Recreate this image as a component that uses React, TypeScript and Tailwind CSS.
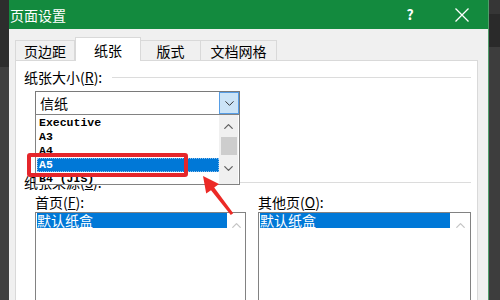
import React from "react";
import { ChevronDown, ChevronUp } from "lucide-react";

// paper sizes shown in the open dropdown
const sizes = ["Executive", "A3", "A4", "A5", "B4 (JIS)"];

const GroupLabel = ({ text, k }: { text: string; k: string }) => (
  <div className="flex items-center pl-[8px] pr-[6px]">
    <span className="leading-[16px]">
      {text}(<span className="underline">{k}</span>):
    </span>
    <div className="ml-[10px] h-px flex-1 bg-[#dcdcdc]" />
  </div>
);

const ListBox = ({ width, rowWidth }: { width: string; rowWidth: string }) => (
  <div className={`flex h-[100px] border border-[#828282] bg-white ${width}`}>
    <div className={rowWidth}>
      <div className="h-[15px] bg-[#0078d7] leading-[15px] text-white">默认纸盒</div>
    </div>
    <div className="flex flex-1 justify-center pt-[5px] text-[#c4c4c4]">
      <ChevronUp size={15} strokeWidth={2} />
    </div>
  </div>
);

const App = () => {
  return (
    <div className="relative flex h-[300px] w-[500px] overflow-hidden bg-[#3d3d3d] font-['Noto_Sans_CJK_SC','Noto_Sans',sans-serif] text-[14px] text-black">
      {/* left desktop strip */}
      <div className="flex w-[9px] shrink-0 flex-col">
        <div className="h-[67px] shrink-0 bg-[#2d2d2d]" />
        <div className="flex-1 bg-[#3f3f3f]" />
      </div>

      {/* dialog */}
      <div className="flex w-[480px] shrink-0 flex-col border-r border-[#4f9e6a] bg-[#f0f0f0]">
        <div className="flex h-[29px] shrink-0 items-center bg-[#138a3e] pl-[1px] text-white">
          <span className="leading-[16px]">页面设置</span>
          <span className="ml-auto w-[30px] text-center text-[14px] font-semibold">?</span>
          <svg className="ml-[25px] mr-[14px]" width="24" height="14" viewBox="0 0 24 14">
            <path d="M5.5 0.5 18.5 13.5 M18.5 0.5 5.5 13.5" stroke="white" strokeWidth="1.3" fill="none" />
          </svg>
        </div>

        {/* tabs */}
        <div className="relative z-10 flex shrink-0 items-end pl-[6px] pt-[8px]">
          <div className="flex h-[20px] w-[60px] items-center justify-center border border-b-0 border-[#d9d9d9] leading-[16px]">页边距</div>
          <div className="-mb-px flex h-[24px] w-[66px] items-center justify-center border border-b-0 border-[#d9d9d9] bg-white leading-[16px]">纸张</div>
          <div className="flex h-[20px] w-[60px] items-center justify-center border border-b-0 border-l-0 border-[#d9d9d9] leading-[16px]">版式</div>
          <div className="flex h-[20px] w-[76px] items-center justify-center border border-b-0 border-l-0 border-[#d9d9d9] leading-[16px]">文档网格</div>
        </div>

        {/* panel */}
        <div className="ml-[6px] flex h-[260px] w-[463px] shrink-0 flex-col border border-[#d9d9d9] bg-white pt-[8px]">
          <GroupLabel text="纸张大小" k="R" />

          <div className="relative ml-[19px] mt-[6px] w-[205px]">
            <div className="flex h-[24px] items-center border border-[#7a7a7a] bg-white">
              <span className="flex-1 pl-[4px] leading-[16px]">信纸</span>
              <div className="flex h-[22px] w-[20px] items-center justify-center border border-[#569de5] bg-[#cce4f7] text-[#333]">
                <ChevronDown size={15} strokeWidth={1.6} />
              </div>
            </div>

            {/* open dropdown */}
            <div className="absolute left-0 top-[23px] z-20 flex h-[71px] w-[205px] overflow-hidden border border-[#828282] bg-white">
              <div className="ml-px w-[182px] pt-px font-['Liberation_Mono',monospace] text-[11.5px] font-bold">
                {sizes.map((s) => (
                  <div
                    key={s}
                    className={
                      s === "A5"
                        ? "h-[14px] border border-dotted border-[#8cc0ee] bg-[#0078d7] pl-px leading-[12px] text-white"
                        : "h-[14px] pl-[2px] leading-[14px]"
                    }
                  >
                    {s}
                  </div>
                ))}
              </div>
              <div className="flex w-[19px] flex-col items-center bg-[#f0f0f0] text-[#606060]">
                <ChevronUp className="mt-[4px] shrink-0" size={15} strokeWidth={2} />
                <div className="mt-[3px] h-[18px] w-[16px] shrink-0 bg-[#cdcdcd]" />
                <ChevronDown className="mt-[6px] shrink-0" size={15} strokeWidth={2} />
              </div>
            </div>
          </div>

          <div className="mt-[59px]">
            <GroupLabel text="纸张来源" k="S" />
          </div>

          <div className="ml-[19px] mt-[4px] flex gap-[12px]">
            <div className="flex flex-col">
              <span className="leading-[16px]">
                首页(<span className="underline">F</span>):
              </span>
              <div className="mt-[2px]">
                <ListBox width="w-[211px]" rowWidth="ml-px w-[190px]" />
              </div>
            </div>
            <div className="flex flex-col">
              <span className="leading-[16px]">
                其他页(<span className="underline">O</span>):
              </span>
              <div className="mt-[2px]">
                <ListBox width="w-[213px]" rowWidth="ml-px w-[190px]" />
              </div>
            </div>
          </div>
        </div>
      </div>

      {/* right desktop strip */}
      <div className="flex w-[11px] shrink-0 flex-col">
        <div className="h-[14px] shrink-0 bg-[#363636]" />
        <div className="h-[33px] shrink-0 bg-[#2a2a2a]" />
        <div className="flex-1 bg-[#3d3d3d]" />
      </div>

      {/* red annotation */}
      <div className="pointer-events-none absolute left-[27px] top-[153px] z-30 h-[24px] w-[161px] rounded-[3px] border-[4px] border-[#e5262b]" />
      <svg className="pointer-events-none absolute inset-0 z-30" width="500" height="300" viewBox="0 0 500 300">
        <polygon
          points="203,176 219,184 214.2,187.6 233.2,213.2 230.8,215 211,190.2 206.2,193.6"
          fill="#ec2a26"
        />
      </svg>
    </div>
  );
};

export default App;
